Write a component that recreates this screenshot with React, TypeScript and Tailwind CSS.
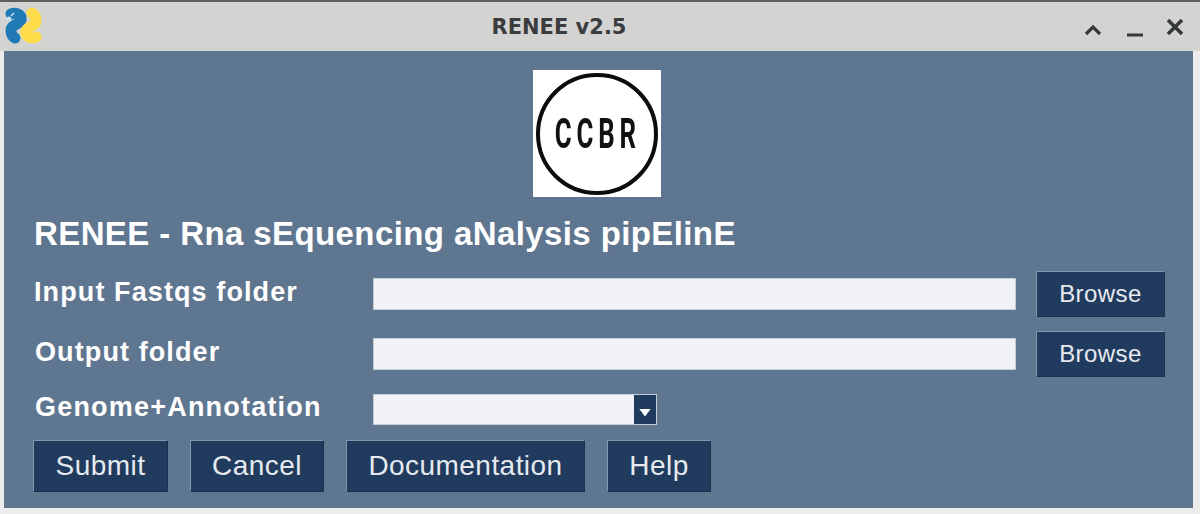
import React from "react";

function Btn({ label, w, h = "h-[46px]", size = "text-[26px]" }: { label: string; w: string; h?: string; size?: string }) {
  return (
    <button
      className={`${w} ${h} ${size} flex items-center justify-center bg-[#213b5e] text-[#e6eaf0] border border-[#8397ad] border-r-[#1c3150] border-b-[#1c3150] font-normal tracking-[0.45px] shrink-0`}
    >
      {label}
    </button>
  );
}

function Python() {
  return (
    <svg width="47" height="51" viewBox="0 0 47 51" className="shrink-0 blur-[0.5px] -mt-[2px]">
      <path d="M11 14C15 12 22 14 21 20C20 25 11 24 11 30C11 34 13 37 15 38" fill="none" stroke="#2079b4" strokeWidth="11" strokeLinecap="round" />
      <path d="M36 37C32 39 25 37 26 31C27 26 36 27 36 21C36 17 34 14 32 13" fill="none" stroke="#ffdc4a" strokeWidth="11" strokeLinecap="round" />
      <circle cx="9" cy="19" r="2.4" fill="#c9e0ee" />
      <path d="M14 13l-3 3" stroke="#c9e0ee" strokeWidth="1.5" />
    </svg>
  );
}

function Field() {
  return <div className="w-[643px] h-[32px] bg-[#f0f2f7] border border-[#c4ccd6]" />;
}

export default function App() {
  return (
    <div className="w-[1200px] h-[514px] bg-[#ececec] flex flex-col overflow-hidden font-['Liberation_Sans',sans-serif]">
      <div className="h-[51px] bg-[#d3d3d1] border-t-2 border-[#5e5e5c] flex items-center shrink-0 relative">
        <div className="w-0 overflow-visible"><Python /></div>
        <div className="flex-1 text-center text-[#3a3c3d] font-bold text-[21px] font-['DejaVu_Sans',sans-serif] pl-[35px] pt-[3px]">
          RENEE v2.5
        </div>
        <div className="flex items-center gap-[22px] pr-[15px]">
          <svg width="20" height="16" viewBox="0 0 20 16" className="mt-[6px]"><path d="M3 12l7-7 7 7" fill="none" stroke="#35393a" strokeWidth="3.2" /></svg>
          <svg width="20" height="16" viewBox="0 0 20 16" className="mt-[6px]"><path d="M2 13h16" fill="none" stroke="#35393a" strokeWidth="3" /></svg>
          <svg width="20" height="18" viewBox="0 0 20 18" className="-ml-[2px]"><path d="M3 2l14 14M17 2L3 16" fill="none" stroke="#35393a" strokeWidth="3.6" /></svg>
        </div>
      </div>

      <div className="ml-[4px] w-[1189px] h-[457px] bg-[#5f7690] flex flex-col shrink-0">
        <div className="flex justify-center pt-[19px] pr-[3px]">
          <div className="w-[128px] h-[127px] bg-white flex items-center justify-center">
            <div className="w-[122px] h-[122px] rounded-full border-[4px] border-[#0c0c0c] flex items-center justify-center">
              <span className="text-[#111] text-[43px] font-['Roboto',sans-serif] font-bold scale-x-[0.6] tracking-[8px] whitespace-nowrap pl-[4px]">CCBR</span>
            </div>
          </div>
        </div>

        <div className="pl-[30px] mt-[15px] text-white font-bold text-[33px] leading-[44px] tracking-[0.4px]">
          RENEE - Rna sEquencing aNalysis pipElinE
        </div>

        <div className="flex items-center pl-[30px] mt-[15px] h-[46px]">
          <div className="w-[339px] text-white font-bold text-[27px] tracking-[1.1px] -mt-[3px]">Input Fastqs folder</div>
          <Field />
          <div className="ml-[20px]"><Btn label="Browse" w="w-[129px]" size="text-[24px]" /></div>
        </div>

        <div className="flex items-center pl-[30px] mt-[14px] h-[46px]">
          <div className="w-[339px] text-white font-bold text-[27px] tracking-[1.1px] pl-[1px] -mt-[3px]">Output folder</div>
          <Field />
          <div className="ml-[20px]"><Btn label="Browse" w="w-[129px]" size="text-[24px]" /></div>
        </div>

        <div className="flex items-center pl-[30px] mt-[16px] h-[32px]">
          <div className="w-[339px] text-white font-bold text-[27px] tracking-[1.2px] pl-[1px] -mt-[4px]">Genome+Annotation</div>
          <div className="w-[284px] h-[31px] bg-[#f0f2f7] border border-[#c4ccd6] flex justify-end">
            <div className="w-[22px] h-[29px] bg-[#213b5e] flex items-end justify-center pb-[7px]">
              <div className="w-[12px] h-[8px] bg-white [clip-path:polygon(0_0,100%_0,50%_100%)]" />
            </div>
          </div>
        </div>

        <div className="flex pl-[29px] mt-[15px] gap-[22px]">
          <Btn label="Submit" w="w-[135px]" h="h-[52px]" size="text-[28px]" />
          <Btn label="Cancel" w="w-[134px]" h="h-[52px]" size="text-[28px]" />
          <Btn label="Documentation" w="w-[239px]" h="h-[52px]" size="text-[28px]" />
          <Btn label="Help" w="w-[104px]" h="h-[52px]" size="text-[28px]" />
        </div>
      </div>
    </div>
  );
}
